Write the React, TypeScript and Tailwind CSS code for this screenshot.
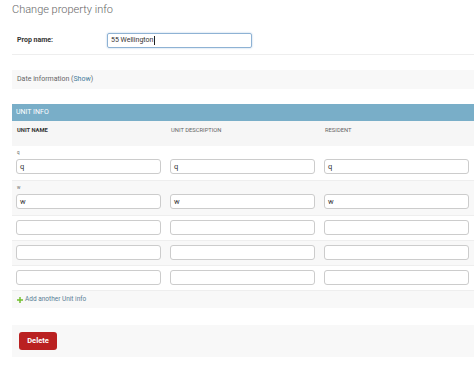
import React from 'react';

const rows = [
  { label: 'q', values: ['q', 'q', 'q'] },
  { label: 'w', values: ['w', 'w', 'w'] },
  { label: '', values: ['', '', ''] },
  { label: '', values: ['', '', ''] },
  { label: '', values: ['', '', ''] },
];

const App: React.FC = () => {
  return (
    <div className="min-h-screen bg-white pl-3 font-['Roboto',sans-serif] text-[#333]">
      {/* Title */}
      <h1 className="h-[20px] pt-[3px] text-[11px] font-light leading-[14px] text-[#666]">
        Change property info
      </h1>

      {/* Prop name row */}
      <div className="mt-[7px] flex h-[28px] items-center border-b border-[#eee]">
        <label className="w-[95px] pl-[5px] text-[7px] font-bold text-[#333]">Prop name:</label>
        <div className="flex h-[15px] w-[145px] items-center rounded-[2px] border border-[#8eb2d4] pl-[3px] text-[7px] shadow-[0_0_2px_#a9c6e0]">
          55 Wellington<span className="ml-[1px] inline-block h-[9px] w-[1px] bg-[#222]" />
        </div>
      </div>

      {/* Date information */}
      <div className="mt-[15px] flex h-[19px] items-center bg-[#f8f8f8] pl-[5px] text-[7px] text-[#666]">
        Date information (<span className="text-[#447e9b]">Show</span>)
      </div>

      {/* Unit info inline */}
      <div className="mt-[15px]">
        <div className="flex h-[17px] items-center bg-[#79aec8] pl-[4px] text-[7px] uppercase text-white">
          Unit info
        </div>
        <div className="grid h-[25px] grid-cols-3 bg-[#f6f6f6] pt-[5px] text-[5.8px] uppercase">
          <div className="pl-[5px] font-bold text-[#333]">Unit name</div>
          <div className="pl-[5px] text-[#666]">Unit description</div>
          <div className="pl-[5px] text-[#666]">Resident</div>
        </div>

        {rows.map((row, i) => (
          <div
            key={i}
            className={`border-b border-[#eee] ${i % 2 === 1 ? 'bg-[#f8f8f8]' : 'bg-white'} ${
              row.label ? 'pt-[3px] pb-[6px]' : 'pt-[4px] pb-[5px]'
            }`}
          >
            {row.label && (
              <p className="h-[10px] pl-[5px] text-[4.5px] leading-[8px] text-[#666]">{row.label}</p>
            )}
            <div className="grid grid-cols-3">
              {row.values.map((v, j) => (
                <div key={j} className="pl-[4px] pr-[5px]">
                  <div className="flex h-[15px] w-full items-center rounded-[3px] border border-[#ccc] bg-white pl-[3px] text-[7.5px] text-[#333]">
                    {v}
                  </div>
                </div>
              ))}
            </div>
          </div>
        ))}

        <div className="flex h-[17px] items-center bg-[#f8f8f8] pl-[5px] text-[6.5px] text-[#5a7e96]">
          <svg className="mr-[2px] h-[6px] w-[6px]" viewBox="0 0 10 10">
            <path d="M3.8 0h2.4v3.8H10v2.4H6.2V10H3.8V6.2H0V3.8h3.8z" fill="#70bf2b" />
          </svg>
          Add another Unit info
        </div>
      </div>

      {/* Submit row */}
      <div className="mt-[17px] flex h-[32px] items-center bg-[#f8f8f8] pl-[7px]">
        <button className="h-[18px] w-[38px] rounded-[3px] bg-[#ba2121] text-[7.5px] font-bold text-white">
          Delete
        </button>
      </div>
    </div>
  );
};

export default App;
